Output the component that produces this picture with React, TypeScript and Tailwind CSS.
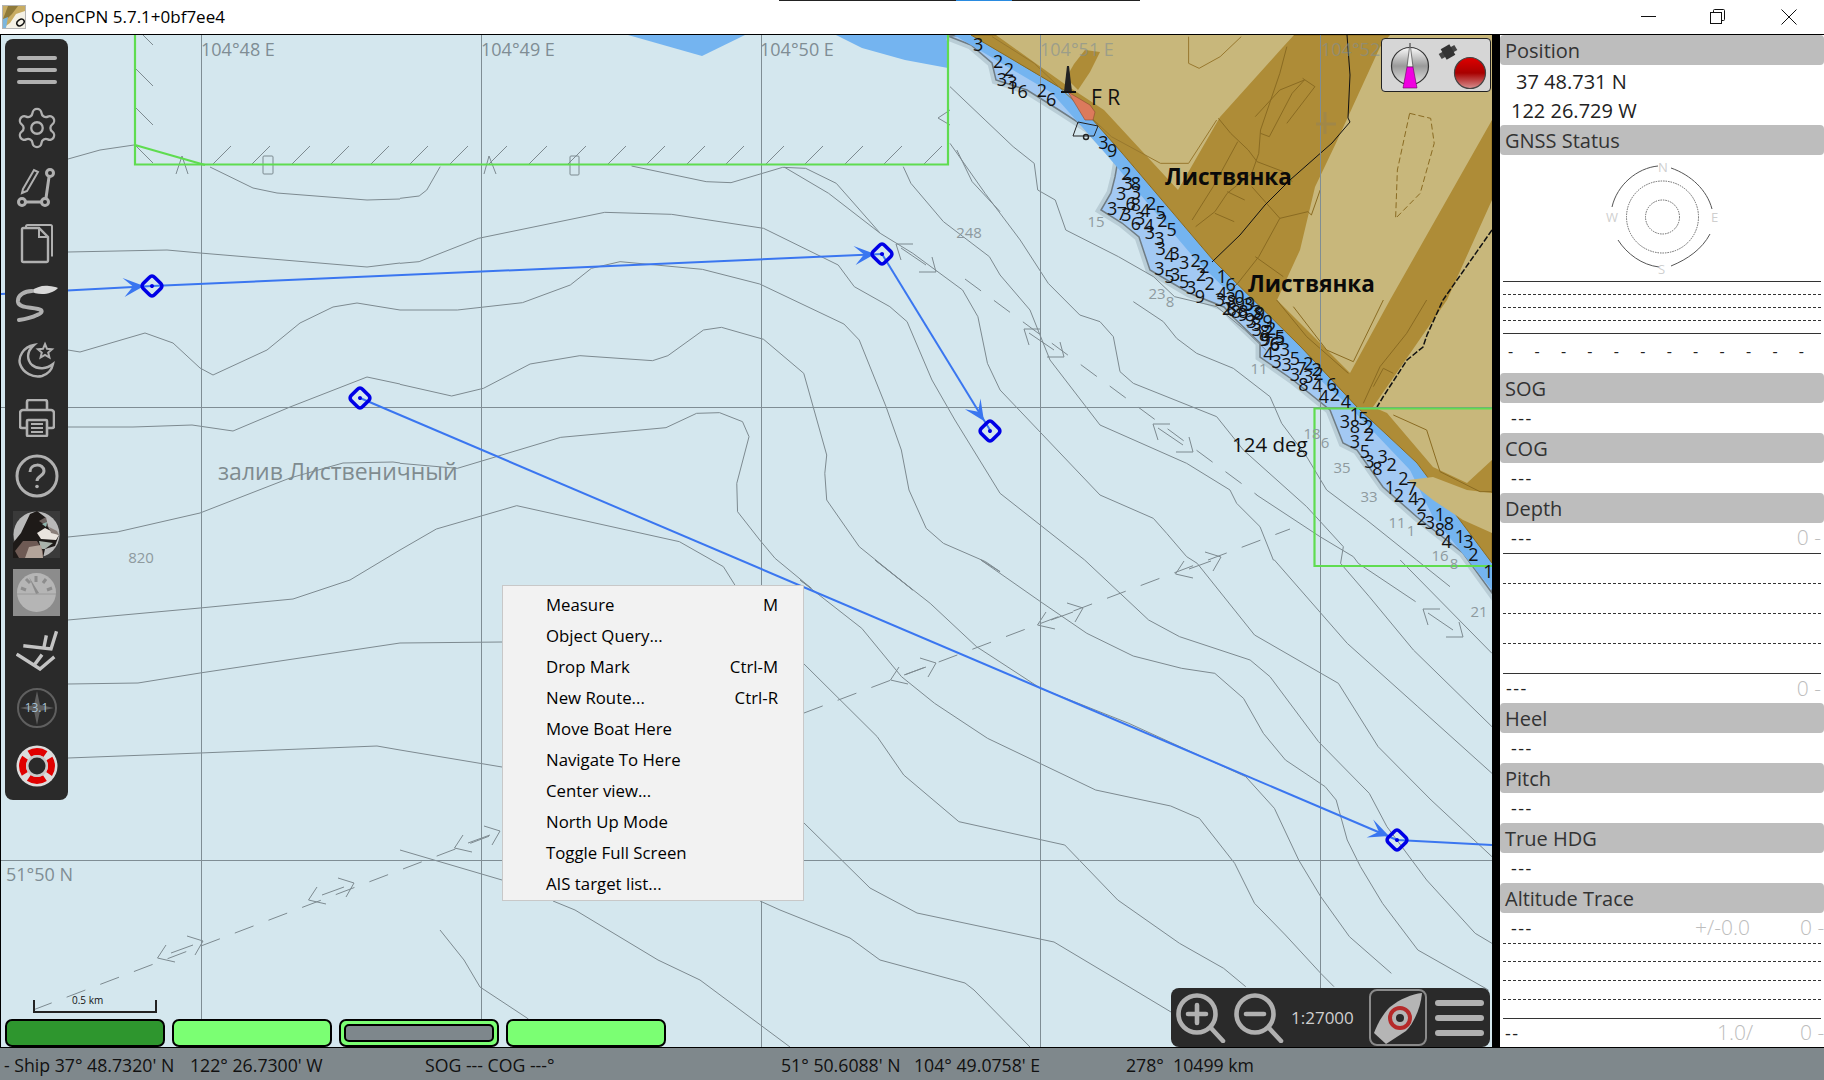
import { Settings } from 'lucide-react';

const GRAY_LINE = '#7d8a90';

const r = (a: number[]) => {
  const out: string[] = [];
  for (let i = 0; i < a.length; i += 2) out.push(`${a[i]},${a[i + 1]}`);
  return out.join(' ');
};
// helpers to read coordinates straight off the zoomed crops
const crop = (sx: number, ox: number, oy: number) => (a: number[]) => {
  const out: number[] = [];
  for (let i = 0; i < a.length; i += 2) out.push(a[i] / sx + ox, a[i + 1] / 3 + oy);
  return out;
};
const c1 = crop(2.613, 400, 150);
const c2 = crop(2.266, 800, 560);
const z8 = crop(2.85, 950, 30);
const z9 = crop(3, 1100, 300);

const contours = [
  [68, 159, 100, 150, 134, 145],
  [210, 167, 253, 188, 277, 193, 367, 200, 400, 199],
  c1([0, 145, 50, 138, 70, 120, 105, 50]),
  [...c1([605, 48, 800, 95, 865, 98, 1000, 52, 1060, 55, 1140, 100, 1190, 165, 1255, 250, 1340, 310, 1470, 420, 1510, 500, 1535, 640, 1568, 720]), ...z9([0, 585, 160, 655, 200, 700, 260, 770]), ...c2([900, 10, 1030, 225, 1220, 370, 1310, 560, 1430, 720, 1568, 890])],
  c1([1005, 52, 1120, 130, 1255, 250]),
  [68, 252, 167, 250, 200, 253, 367, 267, 400, 263],
  [...c1([0, 340, 50, 335, 205, 265, 535, 187, 710, 193, 950, 235, 1145, 345, 1187, 410, 1280, 470, 1325, 515, 1390, 690, 1450, 810, 1568, 1030]), ...c2([645, 0, 790, 180, 860, 230, 1020, 300, 1065, 350, 1175, 545, 1290, 700, 1330, 800, 1420, 960, 1530, 1120, 1568, 1150])],
  [68, 350, 80, 352, 145, 333, 173, 343, 200, 368, 213, 375, 267, 350, 300, 323, 333, 307, 357, 303, 400, 310],
  [...c1([0, 480, 150, 480, 320, 458, 445, 405, 500, 355, 575, 335, 790, 358, 940, 402, 1160, 522, 1200, 570, 1270, 770, 1310, 900, 1330, 1020, 1375, 1135, 1420, 1180, 1530, 1235, 1568, 1265]), ...c2([410, 0, 545, 125, 650, 220, 755, 288, 865, 325, 940, 340, 1005, 415, 1050, 520, 1100, 600, 1190, 680, 1215, 720, 1240, 840, 1270, 920, 1320, 1030, 1400, 1170, 1560, 1290])],
  [68, 427, 133, 427, 192, 425, 233, 431, 290, 407, 367, 377, 400, 384],
  [...c1([0, 703, 135, 738, 218, 715, 340, 642, 470, 617, 660, 632, 700, 617, 793, 540, 840, 532, 950, 568, 1055, 670, 1115, 915, 1110, 970, 1115, 1050, 1200, 1190, 1340, 1320]), ...c2([170, 0, 295, 130, 400, 260, 545, 385, 745, 490, 1010, 650, 1075, 745, 1130, 900, 1180, 1010, 1245, 1130, 1340, 1240])],
  [68, 537, 117, 532, 200, 513, 290, 478, 343, 463, 393, 462, 400, 463],
  [...c1([0, 940, 150, 955, 420, 862, 695, 833, 775, 790, 835, 788, 895, 815, 912, 860, 880, 1000, 882, 1085, 940, 1170, 980, 1225, 1075, 1315]), ...c2([0, 60, 140, 205, 230, 350, 305, 430, 425, 535, 670, 690, 840, 738, 905, 775, 985, 910, 1030, 1030, 1100, 1125, 1180, 1240, 1210, 1280])],
  [68, 620, 200, 608, 293, 599, 350, 580, 400, 550],
  [...c1([0, 1200, 95, 1137, 305, 1067, 730, 1175, 845, 1250, 875, 1305]), ...c2([0, 300, 175, 530, 235, 645, 360, 785, 600, 855, 720, 1020, 860, 1150, 960, 1225, 1010, 1280])],
  [...c1([1315, 50, 1335, 100, 1420, 215, 1540, 320, 1568, 375]), 1030, 310, 1050, 360, ...z9([0, 375, 260, 490, 390, 570, 410, 610, 480, 680, 520, 780]), ...c2([1075, 0, 1240, 250, 1400, 440, 1568, 640])],
  c1([1455, 0, 1495, 95, 1568, 185]),
  [68, 684, 138, 683, 200, 673, 400, 643, 502, 642],
  [68, 758, 200, 753, 377, 746, 400, 750, 502, 767],
  [400, 850, 502, 880],
  [553, 901, 575, 910, 658, 960, 700, 980, 790, 1047],
  [440, 930, 464, 960, 480, 987, 527, 1018, 560, 1047],
  c2([1265, 10, 1395, 125]),
  c2([1360, 0, 1568, 280]),
  [803, 822, 870, 888, 917, 913, 1054, 942, 1131, 988, 1171, 1012, 1210, 1047],
  [760, 901, 780, 910, 850, 938, 880, 960, 965, 983, 974, 990, 1030, 1047],
  z8([0, 170, 100, 270, 180, 350, 240, 400, 250, 480, 300, 510, 330, 600, 480, 680, 580, 740, 640, 800, 760, 830, 840, 900, 900, 960]),
  [...z8([0, 340, 100, 490, 200, 630, 280, 760, 370, 855]), ...z9([0, 65, 40, 110, 60, 215, 100, 250, 350, 350, 430, 450, 620, 620, 730, 740]), ...c2([1225, 10, 1290, 110, 1390, 270, 1568, 500])],
  z9([100, 5, 190, 65, 230, 115, 290, 160, 400, 205, 510, 290, 545, 370, 620, 470, 680, 570, 800, 660, 950, 780, 1050, 860]),
  z9([470, 585, 660, 710, 760, 770, 775, 790]),
];

const roads = [
  z8([960, 50, 940, 130, 885, 300, 880, 370, 860, 430, 790, 490, 755, 545, 700, 590]),
  z8([1005, 145, 1040, 170, 960, 280]),
  z8([765, 265, 800, 310, 850, 360, 875, 395, 950, 425, 975, 455]),
  z8([820, 335, 750, 470, 690, 570]),
  z8([885, 310, 910, 320, 975, 190, 1010, 150, 940, 180, 870, 260]),
  z8([790, 485, 840, 510]),
  z8([755, 550, 810, 575]),
  z8([860, 470, 940, 565, 880, 680, 820, 760, 790, 790]),
  z8([940, 565, 1020, 545, 1030, 555, 1055, 480]),
  z8([870, 680, 950, 740]),
  z9([530, 0, 620, 110, 745, 220]),
  z9([580, 20, 680, 150, 760, 185, 850, 0]),
  z9([980, 0, 920, 100, 840, 200, 790, 310]),
  z9([820, 260, 850, 205, 880, 220]),
  z9([880, 345, 980, 390, 1020, 515, 1140, 575, 1176, 575]),
];

const tanLines = [
  z8([680, 20, 680, 100, 710, 115, 770, 80, 830, 20]),
  z8([120, 20, 240, 100, 460, 320, 600, 400, 680, 400, 760, 270]),
];

// depth soundings as read off the two crops of the coast
const deep: [number, number, string][] = ([
  [80, 50, '3'], [137, 100, '2'], [168, 125, '2'], [148, 155, '3'], [178, 162, '3'], [178, 178, '1'], [207, 190, '6'], [262, 188, '2'], [288, 215, '6'],
  [437, 342, '3'], [462, 368, '9'], [503, 435, '2'], [507, 467, '3'], [530, 467, '8'], [530, 492, '3'], [488, 497, '3'], [515, 525, '6'], [530, 530, '8'],
  [573, 527, '2'], [600, 552, '5'], [462, 540, '3'], [490, 555, '7'], [503, 560, '3'], [530, 585, '6'], [542, 570, '3'], [556, 548, '4'], [567, 592, '4'],
  [605, 578, '2'], [632, 603, '5'], [570, 612, '3'], [597, 630, '3'], [600, 660, '3'], [625, 682, '4'], [640, 675, '3'], [667, 703, '3'], [700, 697, '2'],
  [725, 715, '2'], [597, 720, '3'], [625, 745, '5'], [642, 740, '3'], [667, 760, '5'], [687, 778, '3'], [712, 805, '9'], [716, 740, '2'], [740, 765, '2'],
  [775, 745, '1'], [800, 770, '6'], [775, 795, '4'], [800, 810, '3'], [825, 805, '0'], [790, 840, '2'], [815, 850, '8'], [850, 830, '3'], [835, 860, '9'],
  [880, 855, '8'], [860, 880, '3'], [905, 880, '9'], [875, 905, '3'], [915, 900, '2'], [940, 925, '5'], [895, 935, '9'], [925, 945, '6'],
] as [number, number, string][]).map(([x, y, t]) => [x / 2.85 + 950, y / 3 + 30, t]);

const deep2: [number, number, string][] = ([
  [360, 5, '3'], [395, 10, '8'], [420, 15, '9'], [450, 15, '9'], [395, 35, '6'], [430, 40, '8'], [470, 40, '3'], [450, 65, '9'], [480, 45, '9'],
  [540, 120, '5'], [505, 100, '2'], [470, 80, '3'], [495, 100, '8'], [497, 125, '9'], [525, 140, '6'], [555, 155, '3'], [585, 180, '5'], [505, 165, '4'],
  [530, 190, '3'], [560, 200, '3'], [605, 210, '7'], [625, 195, '2'], [650, 215, '2'], [625, 235, '3'], [585, 230, '3'], [610, 260, '8'], [655, 225, '2'],
  [652, 262, '4'], [695, 260, '6'], [672, 295, '4'], [705, 290, '2'], [738, 310, '4'], [765, 350, '1'], [790, 360, '5'], [735, 370, '3'], [805, 385, '2'],
  [765, 385, '8'], [765, 430, '3'], [808, 410, '2'], [795, 460, '5'], [848, 475, '3'], [832, 512, '8'], [808, 490, '3'], [875, 500, '2'], [910, 542, '2'],
  [935, 570, '7'], [870, 567, '1'], [897, 592, '2'], [940, 600, '4'], [965, 620, '2'], [965, 660, '2'], [990, 672, '3'], [1020, 695, '8'], [1047, 675, '8'],
  [1020, 650, '1'], [1040, 730, '4'], [1080, 715, '1'], [1105, 730, '3'], [1120, 770, '2'], [1165, 820, '1'],
] as [number, number, string][]).map(([x, y, t]) => [x / 3 + 1100, y / 3 + 300, t]);

const shallowGray: [number, number, string][] = [
  [1312, 435, '18'], [1325, 444, '6'], [1342, 469, '35'], [1369, 498, '33'], [1397, 524, '11'], [1411, 532, '1'], [1440, 557, '16'], [1454, 565, '8'],
  [1259, 370, '11'], [1096, 223, '15'], [969, 234, '248'], [1157, 295, '23'], [1170, 303, '8'], [141, 559, '820'], [1479, 613, '21'],
];

const gridLabels: [number, string][] = [
  [201, '104°48 E'], [481, '104°49 E'], [760, '104°50 E'], [1040, '104°51 E'], [1321, '104°52 E'],
];

function Waypoint({ x, y }: { x: number; y: number }) {
  return (
    <g transform={`translate(${x} ${y}) rotate(45)`}>
      <rect x={-8} y={-8} width={16} height={16} rx={3.5} fill="none" stroke="#0000e6" strokeWidth={3.6} />
      <circle r={2} fill="#0000e6" />
    </g>
  );
}

function RouteArrow({ x, y, angle }: { x: number; y: number; angle: number }) {
  return (
    <g transform={`translate(${x} ${y}) rotate(${angle})`}>
      <polygon points="0,0 -21,-9 -11,0 -20,10" fill="#3a76f0" />
    </g>
  );
}

// the two hollow arrow marks of the traffic lanes, one per heading
function LaneArrowUp({ x, y }: { x: number; y: number }) {
  return (
    <g transform={`translate(${x} ${y})`} fill="none" stroke={GRAY_LINE}>
      <polyline points="-14,-3 -22.500,10 -5,14" />
      <line x1={-9} y1={5} x2={13} y2={-3} />
      <polyline points="7,-12 23,-7 15,7" />
    </g>
  );
}

function LaneArrowDown({ x, y }: { x: number; y: number }) {
  return (
    <g transform={`translate(${x} ${y})`} fill="none" stroke={GRAY_LINE}>
      <polyline points="-2,-14 -19,-14 -14,2" />
      <line x1={-14} y1={-10} x2={11} y2={7} />
      <polyline points="4,14 21,14 17,-1" />
    </g>
  );
}

const shallowOutline = r([948, 36, 971, 45, 992, 63, 996, 80, 1027, 90, 1059, 110, 1090, 130, 1118, 160, 1115, 177, 1111, 193, 1101, 210, 1122, 223, 1139, 237, 1150, 270, 1189, 293, 1224, 307, 1233, 317, 1260, 343, 1260, 357, 1293, 380, 1330, 410, 1343, 443, 1357, 450, 1383, 487, 1417, 517, 1463, 553, 1492, 593, 1492, 563, 1357, 407, 1069, 93, 971, 35]);

function Chart() {
  return (
    <svg className="absolute inset-0 block" width={1491} height={1012} viewBox="1 35 1491 1012">
      {/* top water patches */}
      <polygon points={r([628, 35, 745, 35, 702, 56])} fill="#74b4f0" />
      <polygon points={r([836, 35, 948, 35, 948, 68, 905, 60, 862, 48])} fill="#74b4f0" />

      {/* shallow water along the shore */}
      <polygon fill="#b9cdd6" stroke="#b9cdd6" strokeWidth={9} points={shallowOutline} />
      <polygon fill="#a3c9f3" stroke="#6f7c84" strokeWidth={1.500} points={shallowOutline} />
      <polygon
        fill="#74b4f0"
        points={r([971, 35, 1069, 93, 1122, 153, 1213, 260, 1301, 347, 1357, 407, 1417, 463, 1492, 563, 1492, 590, 1433, 517, 1410, 470, 1350, 407, 1284, 347, 1196, 260, 1105, 153, 1052, 93, 954, 35])}
      />

      {/* land */}
      <polygon fill="#ae8c37" stroke="#8a6b22" strokeWidth={1} points={r([971, 35, 1492, 35, 1492, 563, 1417, 463, 1357, 407, 1301, 347, 1213, 260, 1122, 153, 1069, 93])} />
      <polygon fill="#c8b77b" points={r([996, 35, 1294, 35, 1283, 47, 1220, 117, 1178, 190, 1104, 110, 1066, 85])} />
      <polygon fill="#ae8c37" points={r([1066, 78, 1074, 64, 1085, 50, 1100, 52, 1090, 72, 1078, 90])} />
      <polygon fill="#c8b77b" points={r([1390, 35, 1492, 35, 1492, 120, 1390, 300, 1350, 373, 1277, 300, 1300, 250, 1315, 187, 1336, 143, 1380, 47])} />
      <polygon fill="#c8b77b" points={r([1492, 200, 1447, 300, 1373, 407, 1387, 413, 1433, 467, 1467, 483, 1492, 460])} />
      <polygon fill="#c8b77b" points={r([1408, 480, 1433, 477, 1467, 490, 1492, 493, 1492, 533, 1463, 520, 1433, 500])} />
      {roads.map((p, i) => (
        <polyline key={i} points={r(p)} fill="none" stroke="#8a6b22" strokeWidth={1} />
      ))}
      {tanLines.map((p, i) => (
        <polyline key={i} points={r(p)} fill="none" stroke="#98782e" strokeWidth={1} />
      ))}
      <polyline points={r(z8([1310, 250, 1370, 265, 1380, 340, 1340, 490, 1270, 565, 1275, 420, 1310, 250]))} fill="none" stroke="#8a6b22" strokeDasharray="6 3" />
      <polyline points={r([1347, 35, 1350, 75, 1348, 118, 1350, 122, 1332, 143, 1290, 180, 1265, 205, 1240, 235, 1212, 262])} fill="none" stroke="#111" strokeWidth={1} />
      <polyline points={r([1492, 230, 1443, 300, 1427, 335, 1423, 347, 1407, 360, 1383, 397, 1377, 407])} fill="none" stroke="#111" strokeWidth={1.500} strokeDasharray="6 2" />

      {/* depth contours */}
      {contours.map((p, i) => (
        <polyline key={i} points={r(p)} fill="none" stroke={GRAY_LINE} strokeWidth={1} />
      ))}

      {/* traffic scheme */}
      <polyline points={r([33, 1010, 500, 832])} fill="none" stroke={GRAY_LINE} strokeDasharray="20 16" />
      <polyline points={r([804, 713, 1290, 529])} fill="none" stroke={GRAY_LINE} strokeDasharray="20 16" />
      <polyline points={r([965, 279, 1257, 495])} fill="none" stroke={GRAY_LINE} strokeDasharray="20 16" />
      <LaneArrowDown x={915} y={258} />
      <LaneArrowDown x={1043} y={343} />
      <LaneArrowDown x={1172} y={438} />
      <LaneArrowDown x={1442} y={623} />
      <LaneArrowUp x={1198} y={564} />
      <LaneArrowUp x={1060} y={615} />
      <LaneArrowUp x={913} y={670} />
      <LaneArrowUp x={477} y={838} />
      <LaneArrowUp x={331} y={890} />
      <LaneArrowUp x={180} y={948} />

      {/* grid */}
      {[201, 481, 761, 1040, 1320].map((x) => (
        <line key={x} x1={x + 0.5} y1={35} x2={x + 0.5} y2={1047} stroke="#7f8d94" />
      ))}
      {[407, 860].map((y) => (
        <line key={y} x1={0} y1={y + 0.5} x2={1492} y2={y + 0.5} stroke="#7f8d94" />
      ))}

      {/* restricted areas */}
      {[68, 107, 145].map((y) => (
        <line key={y} x1={135} y1={y} x2={153} y2={y + 18} stroke={GRAY_LINE} />
      ))}
      <line x1={143} y1={35} x2={153} y2={45} stroke={GRAY_LINE} />
      {[213, 252, 292, 331, 371, 410, 450, 489, 529, 568, 608, 647, 687, 726, 766, 805, 845, 884, 924].map((x) => (
        <line key={x} x1={x} y1={164} x2={x + 18} y2={146} stroke={GRAY_LINE} />
      ))}
      <polyline points={r([950, 110, 938, 118, 950, 125])} fill="none" stroke={GRAY_LINE} />
      <rect x={263} y={156} width={10} height={18} rx={1} fill="none" stroke={GRAY_LINE} />
      <rect x={570} y={156} width={9} height={19} rx={1} fill="none" stroke={GRAY_LINE} />
      <polyline points={r([176, 174, 182, 156, 188, 174])} fill="none" stroke={GRAY_LINE} />
      <polyline points={r([484, 174, 489, 156, 496, 174])} fill="none" stroke={GRAY_LINE} />
      <polyline points={r([135, 35, 135, 164.500, 948, 164.500, 948, 35])} fill="none" stroke="#5fdc50" strokeWidth={2.200} />
      <line x1={135} y1={145} x2={205} y2={165} stroke="#5fdc50" strokeWidth={2.200} />
      <polyline points={r([1492, 408.500, 1314.500, 408.500, 1314.500, 566, 1492, 566])} fill="none" stroke="#5fdc50" strokeWidth={2.200} />

      {/* buoy & light */}
      <polygon points={r([1068, 92, 1090, 105, 1095, 112, 1093, 120, 1085, 120])} fill="#dc7a5c" stroke="#8a4a30" strokeWidth={0.6} />
      <polygon points={r([1067, 66, 1069, 66, 1072, 92, 1064, 92])} fill="#222" />
      <line x1={1061} y1={92} x2={1076} y2={92} stroke="#111" strokeWidth={2} />
      <polygon points={r([1078, 122, 1098, 126, 1094, 136, 1073, 136])} fill="none" stroke="#222" />
      <circle cx={1086} cy={137} r={2.500} fill="none" stroke="#222" strokeWidth={1.400} />
      <g stroke="#a08748" strokeWidth={3} fill="none">
        <line x1={1325} y1={112} x2={1325} y2={134} />
        <line x1={1316} y1={124} x2={1336} y2={124} />
      </g>

      {/* texts */}
      <g className="font-['Open_Sans',sans-serif]">
        {gridLabels.map(([x, t]) => (
          <text key={x} x={x} y={56} fontSize={18} fill="#7f8d94" fillOpacity={x > 1000 ? 0.6 : 1}>
            {t}
          </text>
        ))}
        <text x={6} y={881} fontSize={18} fill="#7f8d94">51°50 N</text>
        <text x={218} y={480} fontSize={23} fill="#7f8b8f">залив Лиственичный</text>
        {shallowGray.map(([x, y, t], i) => (
          <text key={i} x={x} y={y} fontSize={15} fill="#8e9a9e" textAnchor="middle" dominantBaseline="middle">
            {t}
          </text>
        ))}
        {[...deep, ...deep2].map(([x, y, t], i) => (
          <text key={i} x={x} y={y} fontSize={18} fill="#111" textAnchor="middle" dominantBaseline="middle">
            {t}
          </text>
        ))}
        <text x={1091} y={105} fontSize={21} fill="#111">F R</text>
        <text x={1165} y={185} fontSize={22.500} fontWeight={700} fill="#0a0a0a">Листвянка</text>
        <text x={1248} y={292} fontSize={22.500} fontWeight={700} fill="#0a0a0a">Листвянка</text>
        <text x={1232} y={452} fontSize={20.500} fill="#111">124 deg</text>
      </g>

      {/* routes */}
      <g stroke="#3a76f0" strokeWidth={2} fill="none">
        <line x1={0} y1={294} x2={152} y2={286} />
        <line x1={152} y1={286} x2={882} y2={254} />
        <line x1={882} y1={254} x2={990} y2={430} />
        <line x1={360} y1={398} x2={1397} y2={840} />
        <line x1={1397} y1={840} x2={1492} y2={845} />
      </g>
      <RouteArrow x={144} y={286} angle={-3} />
      <RouteArrow x={875} y={254} angle={-3} />
      <RouteArrow x={984} y={421} angle={58} />
      <RouteArrow x={1389} y={836} angle={23} />
      <Waypoint x={152} y={286} />
      <Waypoint x={882} y={254} />
      <Waypoint x={990} y={431} />
      <Waypoint x={360} y={398} />
      <Waypoint x={1397} y={840} />
    </svg>
  );
}

function ToolSlot({ children }: { children: React.ReactNode }) {
  return <div className="h-[58px] flex items-center justify-center">{children}</div>;
}

const ICON = '#b0b0b0';

function MenuBars({ w, h, gap }: { w: number; h: number; gap: number }) {
  return (
    <svg width={w} height={h * 3 + gap * 2} viewBox={`0 0 ${w} ${h * 3 + gap * 2}`}>
      {[0, 1, 2].map((i) => (
        <rect key={i} y={i * (h + gap)} width={w} height={h} rx={h / 2} fill={ICON} />
      ))}
    </svg>
  );
}

function Toolbar() {
  return (
    <div className="absolute left-1 top-1 w-[63px] h-[761px] bg-[#2a2a2a] rounded-lg pt-[2px] flex flex-col">
      <ToolSlot><MenuBars w={40} h={4} gap={8} /></ToolSlot>
      <ToolSlot><Settings size={46} color={ICON} strokeWidth={1.200} /></ToolSlot>
      <ToolSlot>
        <svg width={42} height={42} viewBox="0 0 42 42" fill="none" stroke={ICON} strokeWidth={3}>
          <circle cx={6} cy={37} r={3.500} />
          <circle cx={29} cy={37} r={3.500} />
          <circle cx={34} cy={8} r={3.500} />
          <path d="M10 37h15M30 33l3-21" />
          <path d="M7 24 18 5l4 2-11 19-5 2z" strokeWidth={2} />
        </svg>
      </ToolSlot>
      <ToolSlot>
        <svg width={34} height={40} viewBox="0 0 34 40" fill="none" stroke={ICON} strokeWidth={2}>
          <path d="M6 4V2.500A1.500 1.500 0 0 1 7.500 1h23A1.500 1.500 0 0 1 32 2.500v30" />
          <path d="M2 5.500A1.500 1.500 0 0 1 3.500 4H19l9 9v23.500a1.500 1.500 0 0 1-1.500 1.500h-23A1.500 1.500 0 0 1 2 36.500z" strokeWidth={2.400} />
          <path d="M19 4v9h9" />
        </svg>
      </ToolSlot>
      <ToolSlot>
        <svg width={44} height={40} viewBox="0 0 44 40">
          <path d="M16 9c5-4 12-6 18-5 3 0 7 1 9 2-4 4-10 6-16 6-5 0-9-1-11-3z" fill="#d8d8d8" />
          <path d="M17 9C10 9 2 13 3 20c1 6 11 5 20 7 5 1 5 4-1 6-4 2-11 4-18 5" fill="none" stroke={ICON} strokeWidth={4} strokeLinecap="round" />
        </svg>
      </ToolSlot>
      <ToolSlot>
        <svg width={38} height={38} viewBox="0 0 38 38" fill="none" stroke={ICON}>
          <path d="M16 4C5 6 0 16 2 23c3 9 13 14 22 12 6-2 10-7 11-12-6 5-15 6-21 1-5-5-6-13 2-20z" strokeWidth={2.400} />
          <path d="M27 3l2 4.800 5 .400-3.800 3.300 1.200 5-4.400-2.700-4.400 2.700 1.200-5-3.800-3.300 5-.400z" strokeWidth={2} />
        </svg>
      </ToolSlot>
      <ToolSlot>
        <svg width={36} height={38} viewBox="0 0 36 38" fill="none" stroke={ICON} strokeWidth={2.600}>
          <path d="M8 11V3a2 2 0 0 1 2-2h16a2 2 0 0 1 2 2v8" />
          <path d="M8 29H3a2 2 0 0 1-2-2V14a3 3 0 0 1 3-3h28a3 3 0 0 1 3 3v13a2 2 0 0 1-2 2h-5" />
          <rect x={8} y={21} width={20} height={16} rx={1} />
          <path d="M12 25h12M12 29h12M12 33h12" strokeWidth={2} />
        </svg>
      </ToolSlot>
      <ToolSlot>
        <svg width={44} height={44} viewBox="0 0 44 44" fill="none" stroke={ICON}>
          <circle cx={22} cy={22} r={20} strokeWidth={3} />
          <path d="M15 18c0-9 14-9 14-1 0 5-7 5-7 10" strokeWidth={3} />
          <circle cx={22} cy={32.500} r={1.800} fill={ICON} stroke="none" />
        </svg>
      </ToolSlot>
      <ToolSlot>
        <svg width={47} height={47} viewBox="0 0 47 47">
          <rect width={47} height={47} fill="#3a3a3a" />
          <circle cx={23.500} cy={23.500} r={23} fill="#b9b9b9" />
          <polygon points="17,3 24,0 32,6 36,18 46,24 42,35 32,38 30,47 0,47 0,32 8,22" fill="#1e1a18" />
          <polygon points="26,10 33,6 35,16" fill="#6a5f5c" />
          <polygon points="24,22 32,17 46,24 43,29 28,28" fill="#e9e4de" />
          <polygon points="29,13 34,11 33,16" fill="#8fb5ae" />
          <polygon points="26,30 40,32 32,38 28,38" fill="#a9b3ac" />
          <polygon points="10,30 24,30 30,40 30,47 6,47 2,40" fill="#6e5a54" />
          <polygon points="16,36 28,34 30,47 12,47" fill="#b3a49a" />
          <polygon points="36,16 44,20 46,24 38,22" fill="#8a7f7a" />
        </svg>
      </ToolSlot>
      <ToolSlot>
        <svg width={47} height={47} viewBox="0 0 47 47">
          <rect width={47} height={47} fill="#8c8c8c" />
          <circle cx={23.500} cy={23.500} r={19.500} fill="#b5b5b5" />
          <path d="M4 25h39" stroke="#9a9a9a" strokeWidth={1} />
          <g stroke="#8c8c8c" strokeWidth={3}>
            <path d="M8 19l5 2M13 10l4 4M23 7v6M33 10l-3 4M39 19l-5 2" />
          </g>
          <path d="M16 8l7 17 3-1z" fill="#8c8c8c" />
        </svg>
      </ToolSlot>
      <ToolSlot>
        <svg width={42} height={42} viewBox="0 0 42 42" fill="none" stroke="#c4c4c4" strokeWidth={3.400}>
          <path d="M9 17l26 3 5-16M28 18l2-10" strokeLinecap="square" />
          <path d="M2 26l22 14 13-11M19 35l6-8" strokeLinecap="square" />
        </svg>
      </ToolSlot>
      <ToolSlot>
        <div className="relative w-[40px] h-[40px]">
          <svg className="absolute inset-0" width={40} height={40} viewBox="0 0 40 40">
            <circle cx={20} cy={20} r={19} fill="none" stroke="#5f5f5f" strokeWidth={2} />
            <polygon points="20,3 23,17 37,20 23,23 20,37 17,23 3,20 17,17" fill="#5f5f5f" />
          </svg>
          <span className="absolute inset-0 flex items-center justify-center text-[12px] text-[#a9c3d6]">13.1</span>
        </div>
      </ToolSlot>
      <ToolSlot>
        <svg width={42} height={42} viewBox="0 0 42 42">
          <circle cx={21} cy={21} r={20.500} fill="#dcdcdc" />
          <circle cx={21} cy={21} r={14.500} fill="none" stroke="#e00000" strokeWidth={7} strokeDasharray="17 5.780" strokeDashoffset={8.500} />
          <circle cx={21} cy={21} r={11} fill="#c8c8c8" />
          <circle cx={21} cy={21} r={8.500} fill="#2a2a2a" />
        </svg>
      </ToolSlot>
    </div>
  );
}

function ScaleBar() {
  return (
    <div className="absolute left-[32px] top-[965px] w-[124px] h-[13px] border-x-2 border-b-2 border-[#222]">
      <div className="-mt-[6px] pl-[37px] text-[10px] leading-[12px] text-[#111]">0.5 km</div>
    </div>
  );
}

function PianoKeys() {
  return (
    <div className="absolute left-[4px] top-[984px] flex gap-[7px]">
      <div className="w-[160px] h-[28px] rounded-[7px] border-2 border-black bg-[#2e962e]" />
      <div className="w-[160px] h-[28px] rounded-[7px] border-2 border-black bg-[#7bff73]" />
      <div className="w-[160px] h-[28px] rounded-[7px] border-2 border-black bg-[#7bff73] p-[3px]">
        <div className="h-full rounded-[5px] border-2 border-black bg-[#7e878c]" />
      </div>
      <div className="w-[160px] h-[28px] rounded-[7px] border-2 border-black bg-[#7bff73]" />
    </div>
  );
}

function ZoomPanel() {
  return (
    <div className="absolute left-[1170px] top-[953px] w-[319px] h-[59px] bg-[#2a2a2a] rounded-lg flex items-center pl-[5px]">
      <svg width={50} height={50} viewBox="0 0 50 50" fill="none" stroke={ICON} strokeWidth={4.600}>
        <circle cx={21} cy={21} r={18.500} />
        <path d="M35 35l12 13" strokeLinecap="round" />
        <path d="M12 21h18M21 12v18" strokeLinecap="round" />
      </svg>
      <svg className="ml-[8px]" width={50} height={50} viewBox="0 0 50 50" fill="none" stroke={ICON} strokeWidth={4.600}>
        <circle cx={21} cy={21} r={18.500} />
        <path d="M35 35l12 13" strokeLinecap="round" />
        <path d="M12 21h18" strokeLinecap="round" />
      </svg>
      <span className="ml-[7px] w-[78px] text-[17px] text-[#cfcfcf]">1:27000</span>
      <div className="w-[58px] h-[57px] border-2 border-[#8a8a8a] rounded-lg flex items-center justify-center">
        <svg width={52} height={54} viewBox="0 0 52 54">
          <path d="M50 2c-1 14-8 30-16 38L14 53 2 42c3-8 8-18 16-26C28 8 40 3 50 2z" fill="#b5b5b5" />
          <circle cx={28} cy={27} r={10} fill="none" stroke="#b52a2a" strokeWidth={4} />
          <circle cx={28} cy={27} r={4} fill="#2a2a2a" />
        </svg>
      </div>
      <div className="ml-[8px]"><MenuBars w={49} h={6} gap={9} /></div>
    </div>
  );
}

function CompassWidget() {
  return (
    <div className="absolute left-[1380px] top-[3px] w-[110px] h-[54px] bg-[#d6d6d6] border border-[#222] rounded flex items-center">
      <svg className="ml-[8px]" width={42} height={50} viewBox="0 0 42 50">
        <defs>
          <linearGradient id="dial" x1="0" y1="0" x2="0" y2="1">
            <stop offset="0" stopColor="#fafafa" />
            <stop offset="0.5" stopColor="#9a9a9a" />
            <stop offset="1" stopColor="#e4e4e4" />
          </linearGradient>
        </defs>
        <circle cx={20} cy={26} r={18.500} fill="url(#dial)" stroke="#333" strokeWidth={1.200} />
        <polygon points="20,3 17,27 23,27" fill="#eeeeee" stroke="#333" strokeWidth={0.6} />
        <polygon points="17,27 23,27 27,48 13,48" fill="#f000e0" stroke="#6a0062" strokeWidth={0.6} />
      </svg>
      <svg className="ml-[6px]" width={50} height={50} viewBox="0 0 50 50">
        <defs>
          <linearGradient id="gps" x1="0" y1="0" x2="0" y2="1">
            <stop offset="0" stopColor="#e00000" />
            <stop offset="0.5" stopColor="#a80000" />
            <stop offset="1" stopColor="#d89090" />
          </linearGradient>
        </defs>
        <g transform="rotate(-30 10 12)">
          <rect x={1} y={9} width={18} height={6} fill="#444" />
          <rect x={5} y={6} width={10} height={12} fill="#333" />
        </g>
        <circle cx={32} cy={33} r={15.500} fill="url(#gps)" stroke="#444" strokeWidth={1.200} />
      </svg>
    </div>
  );
}

function ContextMenu() {
  const items: [string, string][] = [
    ['Measure', 'M'], ['Object Query...', ''], ['Drop Mark', 'Ctrl-M'], ['New Route...', 'Ctrl-R'], ['Move Boat Here', ''],
    ['Navigate To Here', ''], ['Center view...', ''], ['North Up Mode', ''], ['Toggle Full Screen', ''], ['AIS target list...', ''],
  ];
  return (
    <div className="absolute left-[501px] top-[550px] w-[302px] h-[316px] bg-[#f2f2f2] border border-[#c8c8c8] pt-[3px] text-[16.800px] text-black">
      {items.map(([label, key]) => (
        <div key={label} className="h-[31px] flex items-center justify-between pl-[43px] pr-[25px]">
          <span>{label}</span>
          <span>{key}</span>
        </div>
      ))}
    </div>
  );
}

function Header({ children }: { children: React.ReactNode }) {
  return (
    <div className="h-[30px] shrink-0 bg-[#bdbdbd] rounded-[4px] pl-[5px] text-[20px] leading-[32px] text-[#333]">{children}</div>
  );
}

function Dashes() {
  return <span className="text-[18px] tracking-[1.500px]">---</span>;
}

function Value() {
  return (
    <div className="h-[30px] shrink-0 flex items-center pl-[11px] text-[#222]">
      <Dashes />
    </div>
  );
}

function Line({ dotted, top }: { dotted?: boolean; top: number }) {
  return (
    <div
      className={`mx-[3px] shrink-0 border-t border-[#333] ${dotted ? 'border-dashed' : 'border-solid'}`}
      style={{ marginTop: top }}
    />
  );
}

function Faint({ children, className = '' }: { children: React.ReactNode; className?: string }) {
  return <span className={`shrink-0 whitespace-nowrap text-[21px] font-light text-[#bdbdbd] ${className}`}>{children}</span>;
}

function GnssDial() {
  return (
    <div className="relative h-[126px] shrink-0">
      <svg className="absolute left-[110px] top-[8px]" width={106} height={110} viewBox="0 0 106 110" fill="none">
        <path d="M2 44C7 22 27 5 48 3" stroke="#555" />
        <path d="M61 5c20 7 36 22 41 41" stroke="#555" />
        <path d="M100 71C92 86 78 96 61 103" stroke="#555" />
        <path d="M8 77c9 14 24 25 41 27" stroke="#555" />
        <circle cx={52.500} cy={54} r={36} stroke="#666" strokeDasharray="1.500 1" />
        <circle cx={52.500} cy={54} r={17} stroke="#666" strokeDasharray="1.500 1" />
      </svg>
      <span className="absolute left-[158px] top-[3px] text-[13px] text-[#cfcfcf]">N</span>
      <span className="absolute left-[158px] top-[105px] text-[13px] text-[#cfcfcf]">S</span>
      <span className="absolute left-[106px] top-[53px] text-[13px] text-[#cfcfcf]">W</span>
      <span className="absolute left-[211px] top-[53px] text-[13px] text-[#cfcfcf]">E</span>
    </div>
  );
}

function SidePanel() {
  return (
    <div className="w-[324px] h-[1012px] bg-white flex flex-col text-[#222]">
      <Header>Position</Header>
      <div className="h-[30px] shrink-0 leading-[34px] text-[20px] pl-[16px]">37 48.731 N</div>
      <div className="h-[30px] shrink-0 leading-[32px] text-[20px] pl-[11px]">122 26.729 W</div>
      <Header>GNSS Status</Header>
      <GnssDial />
      <Line top={0} />
      <Line dotted top={12} />
      <Line dotted top={12} />
      <Line dotted top={12} />
      <Line top={12} />
      <div className="h-[39px] shrink-0 pl-[8px] pr-[20px] pb-[5px] flex justify-between items-center text-[16px]">
        {Array.from({ length: 12 }).map((_, i) => (
          <span key={i}>-</span>
        ))}
      </div>
      <Header>SOG</Header>
      <Value />
      <Header>COG</Header>
      <Value />
      <Header>Depth</Header>
      <div className="h-[30px] shrink-0 flex justify-between items-center pl-[11px] pr-[3px]">
        <Dashes />
        <Faint>0 -</Faint>
      </div>
      <Line top={0} />
      <Line dotted top={29} />
      <Line dotted top={29} />
      <Line dotted top={29} />
      <Line top={29} />
      <div className="h-[29px] shrink-0 flex justify-between items-center pl-[6px] pr-[3px]">
        <Dashes />
        <Faint>0 -</Faint>
      </div>
      <Header>Heel</Header>
      <Value />
      <Header>Pitch</Header>
      <Value />
      <Header>True HDG</Header>
      <Value />
      <Header>Altitude Trace</Header>
      <div className="h-[30px] shrink-0 flex items-center pl-[11px]">
        <span className="w-[184px] shrink-0"><Dashes /></span>
        <Faint className="w-[105px]">+/-0.0</Faint>
        <Faint>0 -</Faint>
      </div>
      <Line dotted top={0} />
      <Line dotted top={17} />
      <Line dotted top={18} />
      <Line dotted top={18} />
      <Line top={18} />
      <div className="h-[28px] shrink-0 flex items-center pl-[5px]">
        <span className="w-[212px] shrink-0 text-[18px] tracking-[1.500px]">--</span>
        <Faint className="w-[83px]">1.0/</Faint>
        <Faint>0 -</Faint>
      </div>
    </div>
  );
}

function TitleBar() {
  return (
    <div className="relative h-[35px] border-b border-black bg-white flex items-center text-[17px] text-black">
      <svg className="ml-[2px]" width={24} height={24} viewBox="0 0 24 24">
        <rect x={0.5} y={0.5} width={23} height={23} fill="#f4f1e6" stroke="#b5b5b5" />
        <polygon points="1,1 23,1 23,6 14,9 8,18 1,23" fill="#c8ac62" />
        <polygon points="6,1 16,1 10,9 5,14 1,14" fill="#8f7a3a" />
        <polygon points="1,14 6,12 4,23 1,23" fill="#7db6dc" />
        <ellipse cx={18.500} cy={17.500} rx={4} ry={2.800} fill="none" stroke="#111" strokeWidth={1.500} transform="rotate(-35 18.500 17.500)" />
      </svg>
      <span className="ml-[5px]">OpenCPN 5.7.1+0bf7ee4</span>
      <div className="absolute left-[779px] top-0 w-[361px] h-[1px] bg-[#222] flex justify-start">
        <div className="ml-[177px] w-[56px] h-full bg-[#2a8be0]" />
      </div>
      <svg className="absolute left-[1641px] top-[9px]" width={16} height={16} viewBox="0 0 16 16" stroke="#111" fill="none">
        <path d="M0 7.500h15" />
      </svg>
      <svg className="absolute left-[1710px] top-[9px]" width={16} height={16} viewBox="0 0 16 16" stroke="#111" fill="none">
        <rect x={0.5} y={3.500} width={11} height={11} />
        <path d="M3.500 3.500V1.500a1 1 0 0 1 1-1h9a1 1 0 0 1 1 1v9a1 1 0 0 1-1 1h-2" />
      </svg>
      <svg className="absolute left-[1781px] top-[9px]" width={16} height={16} viewBox="0 0 16 16" stroke="#111" fill="none">
        <path d="M.5.5l15 15M15.500.5l-15 15" />
      </svg>
    </div>
  );
}

function StatusBar() {
  return (
    <div className="relative h-[33px] border-t border-black bg-[#7f888c] text-[17.700px] text-[#111] leading-[34px]">
      <div className="flex whitespace-nowrap">
        <span className="ml-[4px] w-[186px]">- Ship 37° 48.7320' N</span>
        <span className="w-[235px]">122° 26.7300' W</span>
        <span className="w-[356px]">SOG --- COG ---°</span>
        <span className="w-[133px]">51° 50.6088' N</span>
        <span className="w-[212px]">104° 49.0758' E</span>
        <span className="whitespace-pre">278°  10499 km</span>
      </div>
    </div>
  );
}

export default function App() {
  return (
    <div className="w-[1824px] h-[1080px] flex flex-col overflow-hidden bg-white font-['Open_Sans',sans-serif]">
      <TitleBar />
      <div className="flex h-[1012px]">
        <div className="relative w-[1492px] border-l border-black bg-[#d4e7ee] overflow-hidden">
          <Chart />
          <Toolbar />
          <ScaleBar />
          <PianoKeys />
          <ZoomPanel />
          <CompassWidget />
          <ContextMenu />
        </div>
        <div className="w-2 bg-black" />
        <SidePanel />
      </div>
      <StatusBar />
    </div>
  );
}
